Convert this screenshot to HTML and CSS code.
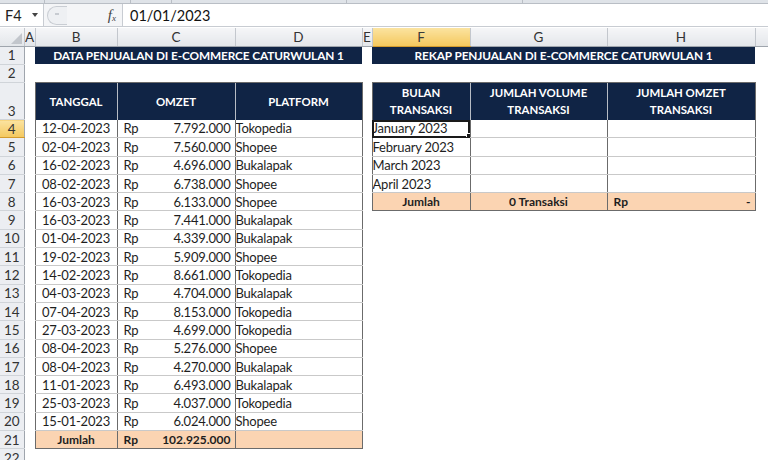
FILE: index.html
```html
<!DOCTYPE html>
<html lang="id">
<head>
  <meta charset="UTF-8" />
  <title>Rekap Penjualan E-Commerce</title>
  <link rel="stylesheet" href="styles.css">
</head>
<body>
  <div class="ribbon-edge">
    <span></span><span></span><span></span><span></span><span></span>
  </div>

  <div class="formula-bar">
    <div class="name-box">F4 <span class="caret"></span></div>
    <div class="fx-tools">
      <span class="pill"><span class="pill-dot"></span></span>
      <span class="fx">f<sub>x</sub></span>
    </div>
    <div class="formula-input">01/01/2023</div>
  </div>

  <table class="sheet">
    <colgroup>
      <col style="width:24px"><col style="width:11px"><col style="width:82px"><col style="width:118px">
      <col style="width:127px"><col style="width:10px"><col style="width:98px"><col style="width:137px">
      <col style="width:148px"><col style="width:30px">
    </colgroup>
    <tr class="col-heads">
      <th class="corner"><span class="corner-mark"></span></th>
      <th>A</th><th>B</th><th>C</th><th>D</th><th>E</th>
      <th class="active">F</th><th>G</th><th>H</th><th></th>
    </tr>
    <tr class="r1">
      <td class="rh">1</td><td></td>
      <td colspan="3" class="title">DATA PENJUALAN DI E-COMMERCE CATURWULAN 1</td>
      <td></td>
      <td colspan="3" class="title">REKAP PENJUALAN DI E-COMMERCE CATURWULAN 1</td>
      <td></td>
    </tr>
    <tr class="r2">
      <td class="rh">2</td><td></td><td></td><td></td><td></td><td></td><td></td><td></td><td></td><td></td>
    </tr>
    <tr class="r3">
      <td class="rh rh-bottom">3</td><td></td>
      <td class="head first">TANGGAL</td>
      <td class="head">OMZET</td>
      <td class="head last">PLATFORM</td>
      <td></td>
      <td class="head first">BULAN<br>TRANSAKSI</td>
      <td class="head">JUMLAH VOLUME<br>TRANSAKSI</td>
      <td class="head last">JUMLAH OMZET<br>TRANSAKSI</td>
      <td></td>
    </tr>
    <tr class="row">
      <td class="rh active">4</td><td></td>
      <td class="date">12-04-2023</td><td class="money"><div><span>Rp</span><span>7.792.000</span></div></td><td class="plat">Tokopedia</td>
      <td></td>
      <td class="month selected">January 2023<span class="handle"></span></td><td class="cell"></td><td class="cell last"></td>
      <td></td>
    </tr>
    <tr class="row">
      <td class="rh">5</td><td></td>
      <td class="date">02-04-2023</td><td class="money"><div><span>Rp</span><span>7.560.000</span></div></td><td class="plat">Shopee</td>
      <td></td>
      <td class="month">February 2023</td><td class="cell"></td><td class="cell last"></td>
      <td></td>
    </tr>
    <tr class="row">
      <td class="rh">6</td><td></td>
      <td class="date">16-02-2023</td><td class="money"><div><span>Rp</span><span>4.696.000</span></div></td><td class="plat">Bukalapak</td>
      <td></td>
      <td class="month">March 2023</td><td class="cell"></td><td class="cell last"></td>
      <td></td>
    </tr>
    <tr class="row">
      <td class="rh">7</td><td></td>
      <td class="date">08-02-2023</td><td class="money"><div><span>Rp</span><span>6.738.000</span></div></td><td class="plat">Shopee</td>
      <td></td>
      <td class="month">April 2023</td><td class="cell"></td><td class="cell last"></td>
      <td></td>
    </tr>
    <tr class="row">
      <td class="rh">8</td><td></td>
      <td class="date">16-03-2023</td><td class="money"><div><span>Rp</span><span>6.133.000</span></div></td><td class="plat">Shopee</td>
      <td></td>
      <td class="total first center">Jumlah</td>
      <td class="total center">0 Transaksi</td>
      <td class="total last money"><div><span>Rp</span><span>-</span></div></td>
      <td></td>
    </tr>
    <tr class="row">
      <td class="rh">9</td><td></td>
      <td class="date">16-03-2023</td><td class="money"><div><span>Rp</span><span>7.441.000</span></div></td><td class="plat">Bukalapak</td>
      <td></td><td></td><td></td><td></td><td></td>
    </tr>
    <tr class="row">
      <td class="rh">10</td><td></td>
      <td class="date">01-04-2023</td><td class="money"><div><span>Rp</span><span>4.339.000</span></div></td><td class="plat">Bukalapak</td>
      <td></td><td></td><td></td><td></td><td></td>
    </tr>
    <tr class="row">
      <td class="rh">11</td><td></td>
      <td class="date">19-02-2023</td><td class="money"><div><span>Rp</span><span>5.909.000</span></div></td><td class="plat">Shopee</td>
      <td></td><td></td><td></td><td></td><td></td>
    </tr>
    <tr class="row">
      <td class="rh">12</td><td></td>
      <td class="date">14-02-2023</td><td class="money"><div><span>Rp</span><span>8.661.000</span></div></td><td class="plat">Tokopedia</td>
      <td></td><td></td><td></td><td></td><td></td>
    </tr>
    <tr class="row">
      <td class="rh">13</td><td></td>
      <td class="date">04-03-2023</td><td class="money"><div><span>Rp</span><span>4.704.000</span></div></td><td class="plat">Bukalapak</td>
      <td></td><td></td><td></td><td></td><td></td>
    </tr>
    <tr class="row">
      <td class="rh">14</td><td></td>
      <td class="date">07-04-2023</td><td class="money"><div><span>Rp</span><span>8.153.000</span></div></td><td class="plat">Tokopedia</td>
      <td></td><td></td><td></td><td></td><td></td>
    </tr>
    <tr class="row">
      <td class="rh">15</td><td></td>
      <td class="date">27-03-2023</td><td class="money"><div><span>Rp</span><span>4.699.000</span></div></td><td class="plat">Tokopedia</td>
      <td></td><td></td><td></td><td></td><td></td>
    </tr>
    <tr class="row">
      <td class="rh">16</td><td></td>
      <td class="date">08-04-2023</td><td class="money"><div><span>Rp</span><span>5.276.000</span></div></td><td class="plat">Shopee</td>
      <td></td><td></td><td></td><td></td><td></td>
    </tr>
    <tr class="row">
      <td class="rh">17</td><td></td>
      <td class="date">08-04-2023</td><td class="money"><div><span>Rp</span><span>4.270.000</span></div></td><td class="plat">Bukalapak</td>
      <td></td><td></td><td></td><td></td><td></td>
    </tr>
    <tr class="row">
      <td class="rh">18</td><td></td>
      <td class="date">11-01-2023</td><td class="money"><div><span>Rp</span><span>6.493.000</span></div></td><td class="plat">Bukalapak</td>
      <td></td><td></td><td></td><td></td><td></td>
    </tr>
    <tr class="row">
      <td class="rh">19</td><td></td>
      <td class="date">25-03-2023</td><td class="money"><div><span>Rp</span><span>4.037.000</span></div></td><td class="plat">Tokopedia</td>
      <td></td><td></td><td></td><td></td><td></td>
    </tr>
    <tr class="row">
      <td class="rh">20</td><td></td>
      <td class="date">15-01-2023</td><td class="money"><div><span>Rp</span><span>6.024.000</span></div></td><td class="plat">Shopee</td>
      <td></td><td></td><td></td><td></td><td></td>
    </tr>
    <tr class="row">
      <td class="rh">21</td><td></td>
      <td class="total first center">Jumlah</td>
      <td class="total money"><div><span>Rp</span><span>102.925.000</span></div></td>
      <td class="total last"></td>
      <td></td><td></td><td></td><td></td><td></td>
    </tr>
    <tr class="row">
      <td class="rh">22</td><td></td><td></td><td></td><td></td><td></td><td></td><td></td><td></td><td></td>
    </tr>
  </table>
</body>
</html>
```

FILE: styles.css
```css
:root {
  --navy: #102445;
  --peach: #fbd4b2;
  --head-bg: #eceef2;
  --head-line: #c3c7cd;
  --grid-dark: #6b6b6b;
  --grid-light: #c9c9c9;
}

* {
  box-sizing: border-box;
}

body {
  margin: 0;
  width: 768px;
  height: 460px;
  overflow: hidden;
  background: #fff;
  font-family: Lato, "Noto Sans", sans-serif;
  font-size: 13px;
  letter-spacing: -0.2px;
  color: #1e1e1e;
}

/* ribbon bottom edge */
.ribbon-edge {
  height: 4px;
  background: #dfe3e8;
  border-bottom: 1px solid #b9bec5;
  display: flex;
}

.ribbon-edge span {
  width: 1px;
  background: #b9bec5;
  margin-left: 44px;
}

.ribbon-edge span:nth-child(2) { margin-left: 85px; }
.ribbon-edge span:nth-child(3) { margin-left: 40px; }
.ribbon-edge span:nth-child(4) { margin-left: 174px; }
.ribbon-edge span:nth-child(5) { margin-left: 175px; }

/* formula bar */
.formula-bar {
  display: flex;
  height: 23px;
  background: #f4f5f7;
  border-bottom: 1px solid #c8ccd2;
  letter-spacing: 0;
}

.name-box {
  width: 44px;
  display: flex;
  align-items: center;
  justify-content: space-between;
  padding: 0 5px 0 5px;
  background: #fff;
  font-size: 14.5px;
  color: #222;
  border-right: 1px solid #c8ccd2;
}

.caret {
  width: 0;
  height: 0;
  border-left: 3px solid transparent;
  border-right: 3px solid transparent;
  border-top: 4px solid #444;
}

.fx-tools {
  width: 78px;
  display: flex;
  align-items: center;
  justify-content: space-between;
  padding: 0 6px 0 3px;
}

.pill {
  width: 20px;
  height: 19px;
  border: 1px solid #c9cdd3;
  border-right: none;
  border-radius: 10px 0 0 10px;
  background: #eef0f3;
  position: relative;
}

.pill-dot {
  position: absolute;
  left: 7px;
  top: 6px;
  width: 4px;
  height: 2px;
  background: #c7cbd1;
}

.fx {
  font-family: "Liberation Serif", serif;
  font-style: italic;
  font-size: 15px;
  color: #444;
}

.fx sub {
  font-size: 9px;
  vertical-align: -1px;
}

.formula-input {
  flex: 1;
  background: #fff;
  border-left: 1px solid #c8ccd2;
  padding-left: 7px;
  display: flex;
  align-items: center;
  font-size: 14.5px;
  color: #111;
}

/* sheet grid */
.sheet {
  border-collapse: collapse;
  table-layout: fixed;
  width: 783px;
  margin-top: 1px;
}

.sheet td,
.sheet th {
  padding: 0;
  white-space: nowrap;
  overflow: hidden;
}

.col-heads th {
  height: 18px;
  font-weight: normal;
  font-size: 13.5px;
  letter-spacing: 0;
  color: #333;
  background: linear-gradient(#f5f6f8, #e3e6ea);
  border-right: 1px solid var(--head-line);
  border-bottom: 1px solid #9fa5ad;
}

.col-heads th.active {
  background: linear-gradient(#fbe3a0, #f4c85e);
  border-bottom: 1px solid #d39b2e;
  color: #3a3a3a;
}

.corner {
  position: relative;
}

.corner-mark {
  position: absolute;
  right: 2px;
  bottom: 2px;
  width: 0;
  height: 0;
  border-left: 11px solid transparent;
  border-bottom: 11px solid #c2c6cc;
}

.rh {
  text-align: center;
  font-size: 13.5px;
  letter-spacing: 0;
  color: #333;
  background: var(--head-bg);
  border-right: 1px solid #9fa5ad;
  border-bottom: 1px solid #d0d4d9;
}

.rh-bottom {
  vertical-align: bottom;
  padding-bottom: 1px;
}

.rh.active {
  background: linear-gradient(#fbe3a0, #f4c85e);
  border-bottom-color: #d39b2e;
}

.r1 { height: 18px; }
.r2 { height: 18.5px; }
.r3 { height: 37px; }
.row { height: 18.3px; }

.title {
  background: var(--navy);
  color: #fff;
  font-weight: bold;
  font-size: 11.8px;
  letter-spacing: -0.1px;
  text-align: center;
}

.head {
  background: var(--navy);
  color: #fff;
  font-weight: bold;
  font-size: 11.4px;
  letter-spacing: 0;
  line-height: 17px;
  text-align: center;
  border-left: 1px solid #b7bcc4;
  border-top: 1px solid var(--grid-dark);
}

.head.first { border-left: 1px solid var(--grid-dark); }
.head.last { border-right: 1px solid var(--grid-dark); }

.date,
.money,
.plat,
.month,
.cell,
.total {
  border-left: 1px solid var(--grid-dark);
  border-bottom: 1px solid var(--grid-light);
}

.plat,
.cell.last,
.total.last {
  border-right: 1px solid var(--grid-dark);
}

.date,
.center {
  text-align: center;
}

.plat,
.month {
  padding-left: 3px;
}

.money div {
  display: flex;
  justify-content: space-between;
  padding: 0 4px 0 6px;
}

.total {
  background: var(--peach);
  font-weight: bold;
  font-size: 12px;
  letter-spacing: 0;
  border-bottom: 1px solid var(--grid-dark);
}

.month.selected {
  position: relative;
  outline: 2px solid #1a1a1a;
  outline-offset: -2px;
}

.handle {
  position: absolute;
  right: -1px;
  bottom: -1px;
  width: 5px;
  height: 5px;
  background: #1a1a1a;
  border: 1px solid #fff;
}
```
